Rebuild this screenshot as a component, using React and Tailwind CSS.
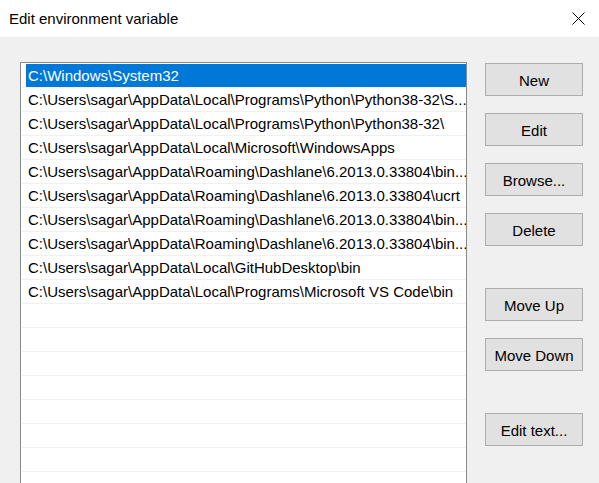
import React from "react";

const paths = [
  "C:\\Windows\\System32",
  "C:\\Users\\sagar\\AppData\\Local\\Programs\\Python\\Python38-32\\S...",
  "C:\\Users\\sagar\\AppData\\Local\\Programs\\Python\\Python38-32\\",
  "C:\\Users\\sagar\\AppData\\Local\\Microsoft\\WindowsApps",
  "C:\\Users\\sagar\\AppData\\Roaming\\Dashlane\\6.2013.0.33804\\bin...",
  "C:\\Users\\sagar\\AppData\\Roaming\\Dashlane\\6.2013.0.33804\\ucrt",
  "C:\\Users\\sagar\\AppData\\Roaming\\Dashlane\\6.2013.0.33804\\bin...",
  "C:\\Users\\sagar\\AppData\\Roaming\\Dashlane\\6.2013.0.33804\\bin...",
  "C:\\Users\\sagar\\AppData\\Local\\GitHubDesktop\\bin",
  "C:\\Users\\sagar\\AppData\\Local\\Programs\\Microsoft VS Code\\bin",
  "",
  "",
  "",
  "",
  "",
  "",
  "",
  "",
];

const buttons = [
  { label: "New", mt: "mt-0" },
  { label: "Edit", mt: "mt-[17px]" },
  { label: "Browse...", mt: "mt-[17px]" },
  { label: "Delete", mt: "mt-[17px]" },
  { label: "Move Up", mt: "mt-[42px]" },
  { label: "Move Down", mt: "mt-[17px]" },
  { label: "Edit text...", mt: "mt-[42px]" },
];

const App = () => {
  return (
    <div className="w-[599px] h-[483px] overflow-hidden flex flex-col bg-[#f0f0f0] text-black font-['Segoe_UI','Liberation_Sans',sans-serif] text-[15px]">
      {/* Title bar */}
      <div className="h-[37px] bg-white flex items-center justify-between pl-[9px] pr-[14px] shrink-0">
        <span className="leading-none">Edit environment variable</span>
        <svg width="13" height="13" viewBox="0 0 13 13" className="mt-[-1px]">
          <path d="M0.5 0.5 L12.5 12.5 M12.5 0.5 L0.5 12.5" stroke="#000" strokeWidth="1" fill="none" />
        </svg>
      </div>

      {/* Body */}
      <div className="flex flex-1 pl-[20px] pt-[25px]">
        <div className="w-[447px] h-[460px] shrink-0 bg-white border border-[#8a8a8a] pt-[1px] pl-[1px] overflow-hidden">
          {paths.map((p, i) => (
            <div key={i} className="h-[24px] border-b border-[#f0f0f0] flex">
              <div
                className={`ml-[4px] flex-1 h-[23px] pl-[2px] pt-[2px] flex items-center whitespace-nowrap overflow-hidden ${
                  i === 0 ? "bg-[#0078d7] text-white" : ""
                }`}
              >
                {p}
              </div>
            </div>
          ))}
        </div>

        <div className="ml-[18px] pt-[1px] flex flex-col">
          {buttons.map((b) => (
            <button
              key={b.label}
              className={`${b.mt} w-[98px] h-[33px] pt-[3px] bg-[#e1e1e1] border border-[#adadad] flex items-center justify-center`}
            >
              {b.label}
            </button>
          ))}
        </div>
      </div>
    </div>
  );
};

export default App;
